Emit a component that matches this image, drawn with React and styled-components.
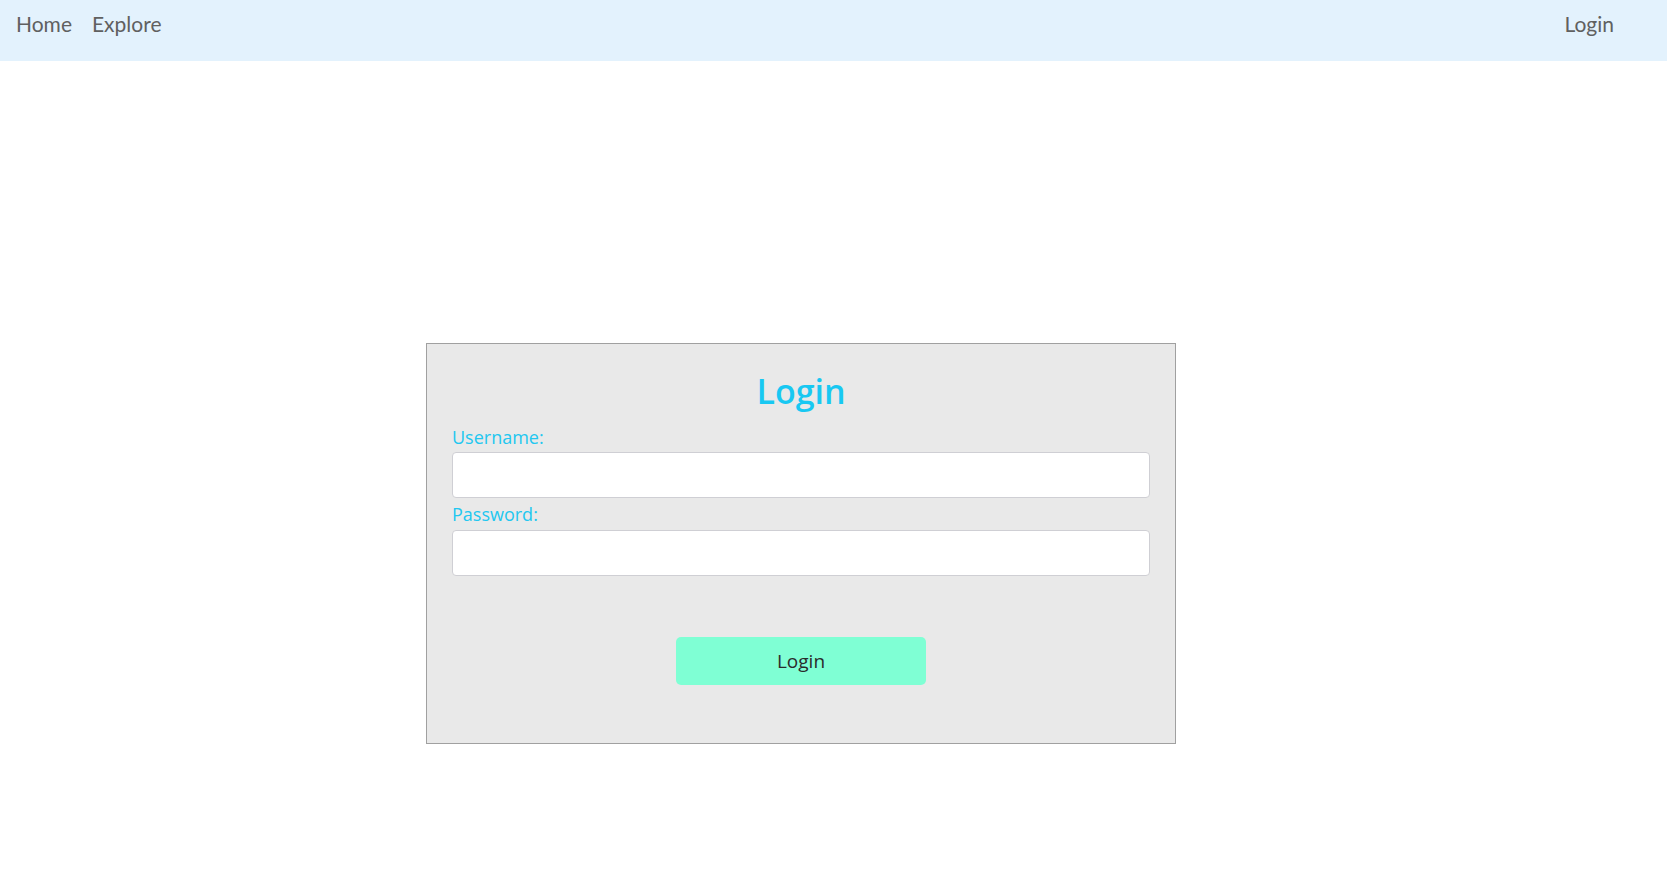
import React, { useState } from 'react';
import styled, { createGlobalStyle } from 'styled-components';

const GlobalStyle = createGlobalStyle`
  html, body {
    margin: 0;
    padding: 0;
    background: #ffffff;
  }
  * {
    box-sizing: border-box;
  }
`;

const Page = styled.div`
  width: 100%;
  min-height: 875px;
  background: #ffffff;
`;

const NavBar = styled.nav`
  display: flex;
  align-items: flex-start;
  height: 61px;
  padding: 11px 53px 0 16px;
  background: #e3f2fd;
  font-family: Lato, 'Open Sans', sans-serif;
`;

const NavLink = styled.a`
  color: #606060;
  font-size: 21px;
  line-height: 1.2;
  text-decoration: none;
  cursor: pointer;
  margin-right: ${props => (props.$last ? '0' : '20px')};
`;

const Spacer = styled.div`
  flex: 1;
`;

const Main = styled.main`
  padding: 282px 0 0 426px;
`;

const Card = styled.form`
  display: flex;
  flex-direction: column;
  width: 750px;
  padding: 0 25px 58px;
  background: #e9e9e9;
  border: 1px solid #a0a0a0;
  font-family: 'Open Sans', 'Noto Sans', sans-serif;
`;

const Title = styled.h2`
  margin: 27px 0 15px;
  text-align: center;
  color: #18c8f2;
  font-size: 34px;
  font-weight: 600;
  line-height: 1.2;
`;

const Label = styled.label`
  margin-bottom: 4px;
  color: #22c7f0;
  font-size: 18px;
  line-height: 1.2;
`;

const Input = styled.input`
  height: 46px;
  margin-bottom: ${props => (props.$last ? '0' : '6px')};
  padding: 0 12px;
  border: 1px solid #cfcfd4;
  border-radius: 4px;
  background: #ffffff;
  font-family: inherit;
  font-size: 16px;
  outline: none;
`;

const ButtonRow = styled.div`
  display: flex;
  justify-content: center;
  margin-top: 61px;
`;

const Button = styled.button`
  width: 250px;
  height: 48px;
  border: none;
  border-radius: 5px;
  background: #7fffd4;
  color: #2b2b2b;
  font-family: inherit;
  font-size: 19px;
  cursor: pointer;
`;

const App = () => {
  const [username, setUsername] = useState('');
  const [password, setPassword] = useState('');

  const submit = e => {
    e.preventDefault();
  };

  return (
    <Page>
      <GlobalStyle />
      <NavBar>
        <NavLink>Home</NavLink>
        <NavLink>Explore</NavLink>
        <Spacer />
        <NavLink $last>Login</NavLink>
      </NavBar>
      <Main>
        <Card onSubmit={submit}>
          <Title>Login</Title>
          <Label htmlFor="username">Username:</Label>
          <Input
            id="username"
            value={username}
            onChange={e => setUsername(e.target.value)}
          />
          <Label htmlFor="password">Password:</Label>
          <Input
            id="password"
            type="password"
            $last
            value={password}
            onChange={e => setPassword(e.target.value)}
          />
          <ButtonRow>
            <Button type="submit">Login</Button>
          </ButtonRow>
        </Card>
      </Main>
    </Page>
  );
};

export default App;
